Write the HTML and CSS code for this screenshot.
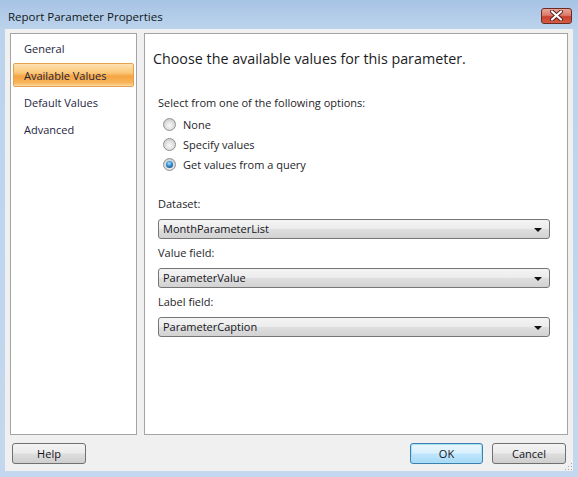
FILE: index.html
```html
<!DOCTYPE html>
<html>
<head>
<meta charset="utf-8">
<link rel="stylesheet" href="styles.css">
</head>
<body>
<div class="window">
  <div class="titlebar">
    <span class="title">Report Parameter Properties</span>
    <div class="close">
      <svg width="15" height="11" viewBox="0 0 15 11">
        <path d="M3 1.5 L12 9.5 M12 1.5 L3 9.5" stroke="#5a2020" stroke-width="4" stroke-linecap="round"/>
        <path d="M3 1.5 L12 9.5 M12 1.5 L3 9.5" stroke="#ffffff" stroke-width="2.2" stroke-linecap="round"/>
      </svg>
    </div>
  </div>
  <div class="client">
    <div class="panels">
      <nav class="sidebar">
        <div class="nav-item">General</div>
        <div class="nav-item active">Available Values</div>
        <div class="nav-item">Default Values</div>
        <div class="nav-item">Advanced</div>
      </nav>
      <main class="content">
        <h1 class="heading">Choose the available values for this parameter.</h1>
        <div class="options-label">Select from one of the following options:</div>
        <div class="radio-list">
          <div class="radio"><span class="radio-circle"></span>None</div>
          <div class="radio"><span class="radio-circle"></span>Specify values</div>
          <div class="radio"><span class="radio-circle checked"></span>Get values from a query</div>
        </div>
        <div class="field">
          <div class="field-label">Dataset:</div>
          <div class="combo"><span>MonthParameterList</span><span class="arrow"></span></div>
        </div>
        <div class="field">
          <div class="field-label">Value field:</div>
          <div class="combo"><span>ParameterValue</span><span class="arrow"></span></div>
        </div>
        <div class="field">
          <div class="field-label">Label field:</div>
          <div class="combo"><span>ParameterCaption</span><span class="arrow"></span></div>
        </div>
      </main>
    </div>
    <div class="buttons">
      <button class="btn">Help</button>
      <div class="spacer"></div>
      <button class="btn default">OK</button>
      <button class="btn">Cancel</button>
    </div>
    <div class="grip"></div>
  </div>
</div>
</body>
</html>
```

FILE: styles.css
```css
* { box-sizing: border-box; }
html, body { margin: 0; padding: 0; }
body {
  width: 578px;
  height: 477px;
  overflow: hidden;
  font-family: "Open Sans", "Liberation Sans", Arial, sans-serif;
  font-size: 11px;
  color: #1e1e28;
}
.window {
  width: 578px;
  height: 477px;
  display: flex;
  flex-direction: column;
  background: linear-gradient(to bottom, #a7c3e4 0px, #bcd3ec 29px, #c3d8ef 100%);
}
.titlebar {
  height: 29px;
  display: flex;
  align-items: center;
  padding: 3px 6px 0 8px;
}
.title {
  flex: 1;
  font-size: 11.5px;
  color: #101820;
}
.close {
  width: 31px;
  height: 16px;
  margin-top: -1px;
  border: 1px solid #6b2b25;
  border-radius: 3px;
  background: linear-gradient(to bottom, #eba596 0%, #dc7a6a 45%, #c9402f 55%, #d45c44 100%);
  display: flex;
  align-items: center;
  justify-content: center;
}
.close svg { display: block; }
.client {
  position: relative;
  flex: 1;
  margin: 0 5px 6px 5px;
  background: #f0f0f0;
  display: flex;
  flex-direction: column;
  padding: 4px 5px 0 5px;
}
.panels {
  height: 402px;
  display: flex;
  gap: 7px;
}
.sidebar {
  width: 127px;
  background: #fff;
  border: 1px solid #a4a4a4;
  padding: 2px 2px 0 2px;
  display: flex;
  flex-direction: column;
  gap: 3px;
}
.nav-item {
  height: 24px;
  line-height: 23px;
  padding-left: 10px;
  border: 1px solid transparent;
  border-radius: 2px;
  color: #1d2540;
}
.nav-item.active {
  border-color: #e3a24e;
  background: linear-gradient(to bottom, #fde2b0 0%, #fbc77a 40%, #f5a542 55%, #f8b45c 85%, #fcd8a0 100%);
}
.content {
  flex: 1;
  background: #fff;
  border: 1px solid #a4a4a4;
  padding: 15px 17px 0 13px;
}
.heading {
  margin: 0 0 0 -5px;
  font-weight: normal;
  font-size: 14.3px;
  line-height: 20px;
  color: #1c1c24;
}
.options-label {
  margin-top: 26px;
  line-height: 16px;
}
.radio-list {
  margin-top: 3px;
  display: flex;
  flex-direction: column;
}
.radio {
  height: 20px;
  display: flex;
  align-items: center;
  padding-left: 5px;
}
.radio-circle {
  width: 13px;
  height: 13px;
  border-radius: 50%;
  margin-right: 7px;
  border: 1px solid #8f9193;
  background: radial-gradient(circle at 50% 60%, #f8f8f8 0%, #e2e2e2 45%, #cfcfcf 75%, #e8e8e8 100%);
  display: flex;
  align-items: center;
  justify-content: center;
}
.radio-circle.checked::after {
  content: "";
  width: 7px;
  height: 7px;
  border-radius: 50%;
  background: radial-gradient(circle at 45% 35%, #b6e3ff 0%, #3a97d6 40%, #1a5c95 75%, #0d3a66 100%);
}
.field {
  display: flex;
  flex-direction: column;
  margin-bottom: 6px;
}
.radio-list + .field { margin-top: 22px; }
.field-label {
  line-height: 16px;
  margin-bottom: 7px;
}
.combo {
  height: 20px;
  border: 1px solid #767676;
  border-radius: 3px;
  background: linear-gradient(to bottom, #f4f4f4 0%, #ececec 48%, #dedede 52%, #d2d2d2 100%);
  display: flex;
  align-items: center;
  justify-content: space-between;
  padding: 0 7px 2px 4px;
  color: #14141c;
}
.arrow {
  width: 0;
  height: 0;
  border-left: 4px solid transparent;
  border-right: 4px solid transparent;
  border-top: 4px solid #111;
  margin-top: 3px;
}
.buttons {
  display: flex;
  gap: 9px;
  padding: 8px 2px 0 2px;
}
.spacer { flex: 1; }
.btn {
  width: 74px;
  height: 21px;
  font-family: "Open Sans", "Liberation Sans", Arial, sans-serif;
  font-size: 11px;
  color: #14141c;
  border: 1px solid #707070;
  border-radius: 3px;
  background: linear-gradient(to bottom, #f3f3f3 0%, #ebebeb 48%, #dddddd 52%, #cfcfcf 100%);
  padding: 0 0 1px 0;
}
.btn.default {
  width: 73px;
  border-color: #3c7fb1;
  box-shadow: inset 0 0 0 1px #a8e0f5;
  background: linear-gradient(to bottom, #eaf6fd 0%, #d9f0fc 48%, #bee6fd 52%, #a7d9f5 100%);
}
.grip {
  position: absolute;
  right: 1px;
  bottom: 1px;
  width: 8px;
  height: 8px;
  background:
    radial-gradient(circle, #a8a8a8 0.8px, transparent 1px) 0 0 / 3px 3px;
  clip-path: polygon(100% 0, 100% 100%, 0 100%);
}
```
